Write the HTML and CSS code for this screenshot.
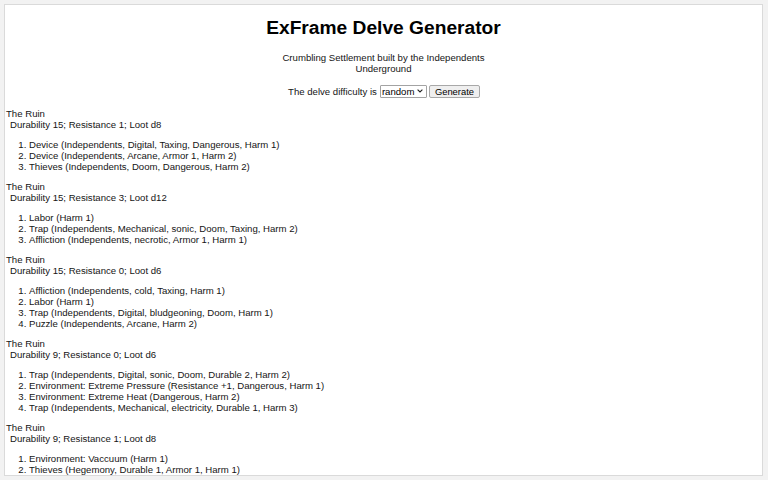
FILE: index.html
```html
<!DOCTYPE html>
<html>
<head>
<meta charset="utf-8">
<title>ExFrame Delve Generator</title>
<link rel="stylesheet" href="styles.css">
</head>
<body>
<div class="frame">
  <h1 class="title">ExFrame Delve Generator</h1>
  <p class="summary">Crumbling Settlement built by the Independents<br>Underground</p>
  <div class="controls">
    <span class="label">The delve difficulty is</span>
    <span class="picker">
      <select class="difficulty"><option>random</option><option>easy</option><option>hard</option></select>
      <svg class="chevron" width="6" height="4" viewBox="0 0 6 4"><path d="M0.6 0.6 L3 3 L5.4 0.6" fill="none" stroke="#222" stroke-width="1.1"/></svg>
    </span>
    <button class="generate">Generate</button>
  </div>

  <div class="delve">
    <div class="name">The Ruin</div>
    <div class="stats">Durability 15; Resistance 1; Loot d8</div>
    <ol class="rooms">
      <li>Device (Independents, Digital, Taxing, Dangerous, Harm 1)</li>
      <li>Device (Independents, Arcane, Armor 1, Harm 2)</li>
      <li>Thieves (Independents, Doom, Dangerous, Harm 2)</li>
    </ol>
  </div>

  <div class="delve">
    <div class="name">The Ruin</div>
    <div class="stats">Durability 15; Resistance 3; Loot d12</div>
    <ol class="rooms">
      <li>Labor (Harm 1)</li>
      <li>Trap (Independents, Mechanical, sonic, Doom, Taxing, Harm 2)</li>
      <li>Affliction (Independents, necrotic, Armor 1, Harm 1)</li>
    </ol>
  </div>

  <div class="delve">
    <div class="name">The Ruin</div>
    <div class="stats">Durability 15; Resistance 0; Loot d6</div>
    <ol class="rooms">
      <li>Affliction (Independents, cold, Taxing, Harm 1)</li>
      <li>Labor (Harm 1)</li>
      <li>Trap (Independents, Digital, bludgeoning, Doom, Harm 1)</li>
      <li>Puzzle (Independents, Arcane, Harm 2)</li>
    </ol>
  </div>

  <div class="delve">
    <div class="name">The Ruin</div>
    <div class="stats">Durability 9; Resistance 0; Loot d6</div>
    <ol class="rooms">
      <li>Trap (Independents, Digital, sonic, Doom, Durable 2, Harm 2)</li>
      <li>Environment: Extreme Pressure (Resistance +1, Dangerous, Harm 1)</li>
      <li>Environment: Extreme Heat (Dangerous, Harm 2)</li>
      <li>Trap (Independents, Mechanical, electricity, Durable 1, Harm 3)</li>
    </ol>
  </div>

  <div class="delve">
    <div class="name">The Ruin</div>
    <div class="stats">Durability 9; Resistance 1; Loot d8</div>
    <ol class="rooms">
      <li>Environment: Vaccuum (Harm 1)</li>
      <li>Thieves (Hegemony, Durable 1, Armor 1, Harm 1)</li>
    </ol>
  </div>
</div>
</body>
</html>
```

FILE: styles.css
```css
html, body {
  margin: 0;
  padding: 0;
  background: #f2f2f2;
}

body {
  padding: 4px 5px 4px 4px;
  font-family: "Liberation Sans", Arial, sans-serif;
  font-size: 9.6px;
  line-height: 11px;
  color: #151515;
}

.frame {
  box-sizing: border-box;
  height: 472px;
  overflow: hidden;
  background: #fff;
  border: 1px solid #dadada;
}

.title {
  font-size: 19.2px;
  line-height: 22px;
  font-weight: bold;
  text-align: center;
  margin: 12px 0 13px;
  color: #000;
}

.summary {
  text-align: center;
  margin: 0 0 10px;
}

.controls {
  display: flex;
  justify-content: center;
  align-items: center;
  gap: 3px;
  height: 14px;
  margin: 0 0 10px;
  padding-left: 1px;
}

.picker {
  display: inline-flex;
  align-items: center;
  gap: 2px;
  height: 11px;
  padding: 0 3px 0 1px;
  border: 1px solid #a3a3a3;
  border-radius: 1px;
  background: #fff;
}

.difficulty {
  appearance: none;
  -webkit-appearance: none;
  font-family: "Liberation Sans", Arial, sans-serif;
  font-size: 9.6px;
  line-height: 11px;
  height: 11px;
  padding: 0;
  margin: 0;
  border: none;
  background: transparent;
  color: #000;
  outline: none;
}

.chevron {
  display: block;
}

.generate {
  font-family: "Liberation Sans", Arial, sans-serif;
  font-size: 9.4px;
  line-height: 11px;
  height: 13px;
  padding: 0 5px;
  margin: 0 0 0 -1px;
  border: 1px solid #a8a8a8;
  border-radius: 2px;
  background: #efefef;
  color: #000;
}

.name {
  padding-left: 1px;
}

.stats {
  padding-left: 5px;
}

.rooms {
  margin: 9px 0;
  padding-left: 24px;
}
```
